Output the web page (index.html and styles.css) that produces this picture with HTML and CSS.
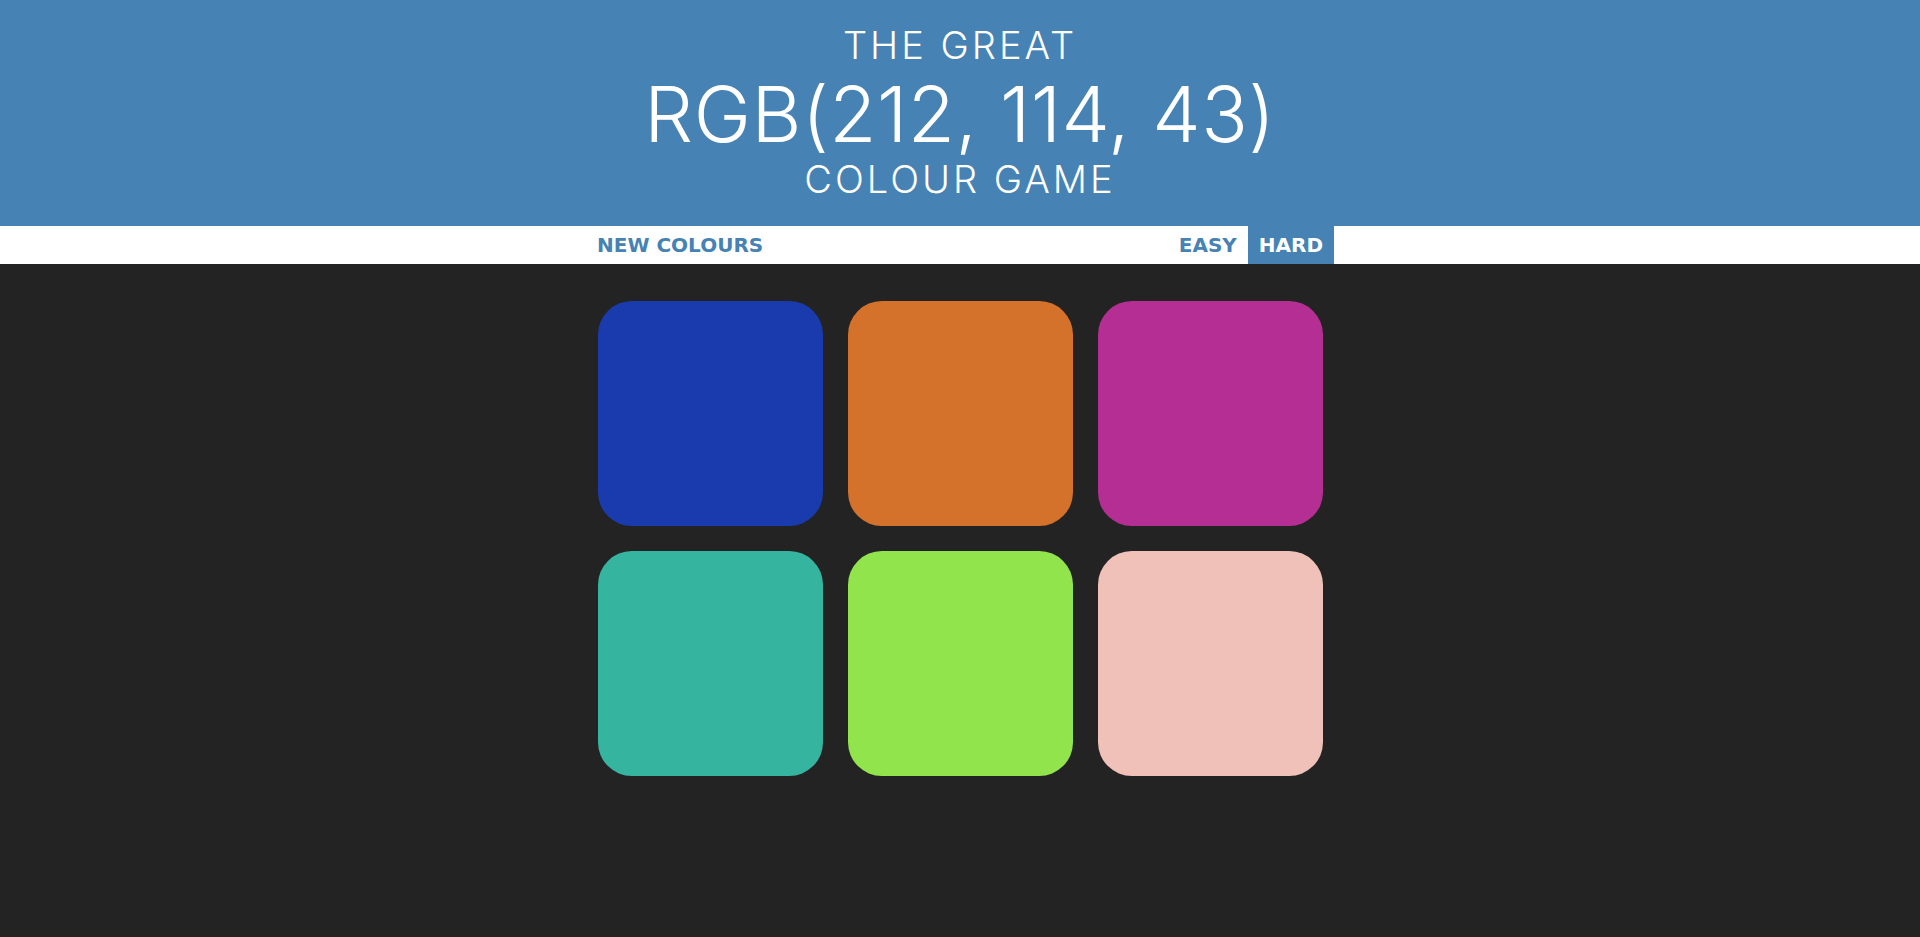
FILE: index.html
```html
<!DOCTYPE html>
<html lang="en">
<head>
    <meta charset="UTF-8">
    <meta name="viewport" content="width=device-width, initial-scale=1.0">
    <title>Colour Game</title>
    <link rel="stylesheet" href="styles.css">
</head>
<body>

    <h1 class="title">
        <span class="title-top">The Great</span>
        <span class="color-display" id="colorDisplay">RGB(212, 114, 43)</span>
        <span class="title-bottom">Colour Game</span>
    </h1>

    <div class="stripe">
        <div class="stripe-inner">
            <button class="btn" id="reset">New Colours</button>
            <div class="modes">
                <button class="btn mode">Easy</button>
                <button class="btn mode selected">Hard</button>
            </div>
        </div>
    </div>

    <!-- six squares, one of them holds the picked colour -->
    <div class="container">
        <div class="square" style="background: rgb(26, 59, 174);"></div>
        <div class="square" style="background: rgb(212, 114, 43);"></div>
        <div class="square" style="background: rgb(180, 46, 148);"></div>
        <div class="square" style="background: rgb(53, 180, 159);"></div>
        <div class="square" style="background: rgb(146, 228, 76);"></div>
        <div class="square" style="background: rgb(239, 193, 185);"></div>
    </div>

</body>
</html>
```

FILE: styles.css
```css
/* Basic Styling */
body {
    margin: 0;
    background-color: #232323;
    font-family: "Inter", "Open Sans", sans-serif;
}

.title {
    margin: 0;
    padding: 20px 0 25px;
    background-color: steelblue;
    color: white;
    text-align: center;
    text-transform: uppercase;
    font-weight: 300;
    font-size: 38px;
    letter-spacing: 3px;
}

.title span {
    display: block;
}

.title-top {
    line-height: 51px;
}

.color-display {
    font-size: 77px;
    line-height: 86px;
    letter-spacing: 0.5px;
}

.title-bottom {
    line-height: 44px;
}

.stripe {
    background-color: white;
    height: 38px;
}

.stripe-inner {
    width: 748px;
    height: 100%;
    margin: 0 auto;
    display: flex;
    justify-content: space-between;
}

.modes {
    display: flex;
}

.btn {
    height: 100%;
    padding: 0 11px;
    border: none;
    background: none;
    color: steelblue;
    font-family: "DejaVu Sans", Verdana, sans-serif;
    font-weight: 700;
    font-size: 20px;
    text-transform: uppercase;
    cursor: pointer;
}

.btn:hover,
.selected {
    background-color: steelblue;
    color: white;
}

.container {
    width: 725px;
    margin: 37px auto;
    display: grid;
    grid-template-columns: repeat(3, 225px);
    gap: 25px;
}

.square {
    aspect-ratio: 1;
    border-radius: 15%;
}
```
